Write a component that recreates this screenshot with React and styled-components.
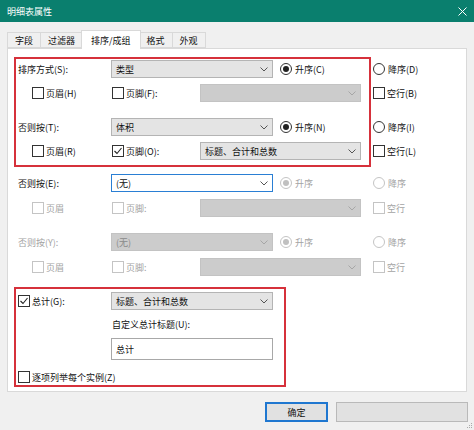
import React from 'react';
import styled, { createGlobalStyle } from 'styled-components';

const Global = createGlobalStyle`
  html, body { margin: 0; padding: 0; }
  body {
    width: 474px; height: 430px; overflow: hidden;
    background: #f0f0f0;
    font-family: "Noto Sans CJK SC", "Noto Sans", sans-serif;
    font-size: 9px; color: #111;
  }
  * { box-sizing: border-box; }
`;

const Window = styled.div`
  position: relative;
  width: 474px; height: 430px;
  display: flex; flex-direction: column;
  background: #f0f0f0;
`;

const TitleBar = styled.div`
  height: 22px; flex: none;
  background: #0a7f6e;
  color: #fff;
  display: flex; align-items: center; justify-content: space-between;
  padding: 0 7px 0 7px;
  font-size: 9px;
`;

const TabStrip = styled.div`
  margin-top: 8px; height: 18px;
  padding-left: 7px;
  display: flex; align-items: flex-end;
  position: relative; z-index: 1;
`;

const Tab = styled.div`
  position: relative;
  height: ${p => (p.$active ? 19 : 16)}px;
  margin: 0 ${p => (p.$active ? -2 : -1)}px ${p => (p.$active ? -1 : 0)}px ${p => (p.$active ? -1 : 0)}px;
  padding: 0 ${p => (p.$active ? 9 : 7)}px;
  background: ${p => (p.$active ? '#fff' : '#f0f0f0')};
  border: 1px solid #d9d9d9;
  border-bottom: ${p => (p.$active ? 'none' : '1px solid #d9d9d9')};
  z-index: ${p => (p.$active ? 2 : 1)};
  display: flex; align-items: center;
  white-space: nowrap;
`;

const Panel = styled.div`
  margin: 0 7px;
  height: 344px; flex: none;
  background: #fff;
  border: 1px solid #d9d9d9;
  padding: 8px 0 0 6px;
  display: flex; flex-direction: column;
`;

const Group = styled.section`
  margin-top: ${p => p.$mt || 0}px;
  width: ${p => p.$w}px;
  border: 2px solid #d6313b;
  padding: ${p => p.$pad};
  display: flex; flex-direction: column;
  gap: ${p => p.$gap}px;
`;

const Plain = styled.div`
  margin-top: ${p => p.$mt}px;
  padding-left: 4px;
  display: flex; flex-direction: column; gap: 16px;
`;

const Pair = styled.div`
  display: flex; flex-direction: column; gap: ${p => p.$gap}px;
`;

const SortRow = styled.div`
  height: 18px;
  display: grid;
  grid-template-columns: 93px 162px 100px max-content;
  align-items: center;
  white-space: nowrap;
`;

const OptRow = styled.div`
  height: 18px;
  padding-left: 14px;
  display: grid;
  grid-template-columns: 80px 88px 161px max-content;
  align-items: center;
  white-space: nowrap;
`;

const Cell = styled.div`
  padding-left: ${p => p.$pl || 0}px;
  display: flex; align-items: center;
`;

const Label = styled.span`
  color: ${p => (p.$disabled ? '#a3a3a3' : '#111')};
`;

const SelectBox = styled.div`
  height: 18px;
  border: 1px solid ${p => ({ normal: '#b4b4b4', focus: '#2a7fd4', disabled: '#c3c3c3' }[p.$v])};
  background: ${p => ({ normal: '#e4e4e4', focus: '#fff', disabled: '#cccccc' }[p.$v])};
  color: ${p => (p.$v === 'disabled' ? '#8a8a8a' : '#111')};
  display: flex; align-items: center; justify-content: space-between;
  padding: 0 4px 0 4px;
  white-space: nowrap;
`;

const LabeledCtl = styled.label`
  display: inline-flex; align-items: center; gap: 2px;
  white-space: nowrap;
`;

const Box = styled.span`
  width: 12px; height: 12px; flex: none;
  border: 1px solid ${p => (p.$disabled ? '#c4c4c4' : '#333')};
  background: #fff;
  display: inline-flex; align-items: center; justify-content: center;
`;

const RadioDot = styled.span`
  width: 12px; height: 12px; flex: none;
  border-radius: 50%;
  border: 1px solid ${p => (p.$disabled ? '#c4c4c4' : '#333')};
  background: #fff;
  display: inline-flex; align-items: center; justify-content: center;
  margin-right: 1px;
  &::after {
    content: '';
    display: ${p => (p.$checked ? 'block' : 'none')};
    width: 6px; height: 6px; border-radius: 50%;
    background: ${p => (p.$disabled ? '#c0c0c0' : '#222')};
  }
`;

const Caption = styled.div`
  margin-top: ${p => p.$mt}px;
  padding-left: 94px;
  height: 12px; line-height: 12px;
`;

const TextInput = styled.div`
  margin-top: 7px;
  margin-left: 93px;
  width: 162px; height: 22px;
  border: 1px solid #a8a8a8;
  background: #fff;
  display: flex; align-items: center;
  padding-left: 4px;
`;

const CheckLine = styled.div`
  margin-top: ${p => p.$mt}px;
  height: 14px;
  display: flex; align-items: center;
`;

const Footer = styled.div`
  padding: 10px 6px 0 0;
  display: flex; justify-content: flex-end; gap: 8px;
`;

const Button = styled.div`
  width: ${p => p.$w}px; height: 20px;
  background: #e1e1e1;
  border: 1px solid ${p => (p.$default ? '#1f77d0' : '#b9b9b9')};
  box-shadow: ${p => (p.$default ? 'inset 0 0 0 1px #1f77d0' : 'none')};
  display: flex; align-items: center; justify-content: center;
  color: #111;
`;

const Grip = styled.svg`
  position: absolute; right: 1px; bottom: 1px;
`;

const Chevron = ({ disabled }) => (
  <svg width="8" height="5" viewBox="0 0 8 5">
    <polyline points="0.5,0.5 4,4 7.5,0.5" fill="none" stroke={disabled ? '#a6a6a6' : '#555'} strokeWidth="1" />
  </svg>
);

const Select = ({ v = 'normal', children }) => (
  <SelectBox $v={v}>
    <span>{children}</span>
    <Chevron disabled={v === 'disabled'} />
  </SelectBox>
);

const Check = ({ checked, disabled, children }) => (
  <LabeledCtl>
    <Box $disabled={disabled}>
      {checked && (
        <svg width="10" height="10" viewBox="0 0 10 10">
          <polyline points="1.5,5 4,7.5 8.5,2" fill="none" stroke="#222" strokeWidth="1.1" />
        </svg>
      )}
    </Box>
    <Label $disabled={disabled}>{children}</Label>
  </LabeledCtl>
);

const Radio = ({ checked, disabled, children }) => (
  <LabeledCtl>
    <RadioDot $checked={checked} $disabled={disabled} />
    <Label $disabled={disabled}>{children}</Label>
  </LabeledCtl>
);

const SortLine = ({ label, value, v, up, down, disabled, labelDisabled, checkLabel }) => (
  <SortRow>
    <Cell>{checkLabel ? <Check checked>{checkLabel}</Check> : <Label $disabled={labelDisabled}>{label}</Label>}</Cell>
    <Select v={v}>{value}</Select>
    {up !== undefined ? (
      <Cell $pl={7}><Radio checked disabled={disabled}>{up}</Radio></Cell>
    ) : <span />}
    {down !== undefined ? <Cell><Radio disabled={disabled}>{down}</Radio></Cell> : <span />}
  </SortRow>
);

const OptLine = ({ head, foot, footChecked, value, v, blank, disabled }) => (
  <OptRow>
    <Cell><Check disabled={disabled}>{head}</Check></Cell>
    <Cell><Check checked={footChecked} disabled={disabled}>{foot}</Check></Cell>
    <Select v={v}>{value}</Select>
    <Cell $pl={12}><Check disabled={disabled}>{blank}</Check></Cell>
  </OptRow>
);

export default function App() {
  const tabs = ['字段', '过滤器', '排序/成组', '格式', '外观'];
  return (
    <Window>
      <Global />
      <TitleBar>
        <span>明细表属性</span>
        <svg width="9" height="9" viewBox="0 0 9 9">
          <path d="M0.5 0.5 L8.5 8.5 M8.5 0.5 L0.5 8.5" stroke="#fff" strokeWidth="1" />
        </svg>
      </TitleBar>
      <TabStrip>
        {tabs.map(t => (
          <Tab key={t} $active={t === '排序/成组'}>{t}</Tab>
        ))}
      </TabStrip>
      <Panel>
        <Group $w={357} $pad="1px 0 5px 2px" $gap={16}>
          <Pair $gap={6}>
            <SortLine label="排序方式(S):" value="类型" up="升序(C)" down="降序(D)" />
            <OptLine head="页眉(H)" foot="页脚(F):" v="disabled" value="" blank="空行(B)" />
          </Pair>
          <Pair $gap={6}>
            <SortLine label="否则按(T):" value="体积" up="升序(N)" down="降序(I)" />
            <OptLine head="页眉(R)" foot="页脚(O):" footChecked value="标题、合计和总数" blank="空行(L)" />
          </Pair>
        </Group>
        <Plain $mt={7}>
          <Pair $gap={7}>
            <SortLine label="否则按(E):" value="(无)" v="focus" up="升序" down="降序" disabled />
            <OptLine head="页眉" foot="页脚:" v="disabled" value="" blank="空行" disabled />
          </Pair>
          <Pair $gap={7}>
            <SortLine label="否则按(Y):" value="(无)" v="disabled" up="升序" down="降序" disabled labelDisabled />
            <OptLine head="页眉" foot="页脚:" v="disabled" value="" blank="空行" disabled />
          </Pair>
        </Plain>
        <Group $w={272} $mt={11} $pad="3px 0 1px 2px" $gap={0}>
          <SortLine checkLabel="总计(G):" value="标题、合计和总数" />
          <Caption $mt={9}>自定义总计标题(U):</Caption>
          <TextInput>总计</TextInput>
          <CheckLine $mt={10}><Check>逐项列举每个实例(Z)</Check></CheckLine>
        </Group>
      </Panel>
      <Footer>
        <Button $w={63} $default>确定</Button>
        <Button $w={132} />
      </Footer>
      <Grip width="6" height="6" viewBox="0 0 6 6">
        <rect x="4" y="0" width="1" height="1" fill="#aaa" />
        <rect x="2" y="2" width="1" height="1" fill="#aaa" />
        <rect x="4" y="2" width="1" height="1" fill="#aaa" />
        <rect x="0" y="4" width="1" height="1" fill="#aaa" />
        <rect x="2" y="4" width="1" height="1" fill="#aaa" />
        <rect x="4" y="4" width="1" height="1" fill="#aaa" />
      </Grip>
    </Window>
  );
}
